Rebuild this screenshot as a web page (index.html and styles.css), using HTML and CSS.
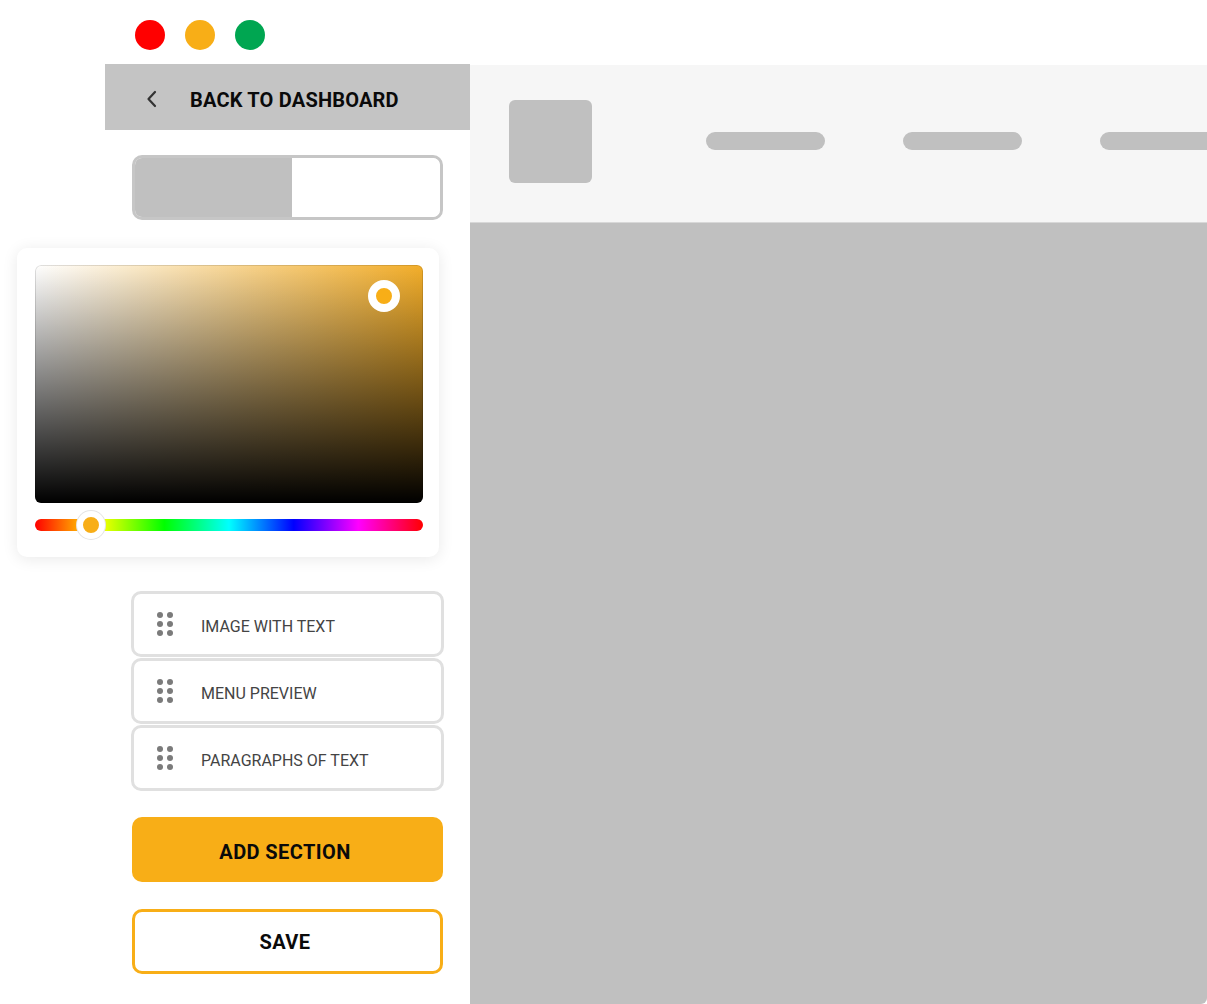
FILE: index.html
```html
<!DOCTYPE html>
<html lang="en">
<head>
  <meta charset="UTF-8" />
  <title>Page Editor</title>
  <link rel="stylesheet" href="styles.css">
</head>
<body>
  <!-- Window controls -->
  <div class="lights">
    <span class="light red"></span>
    <span class="light amber"></span>
    <span class="light green"></span>
  </div>

  <div class="window">
    <aside class="sidebar">
      <a class="back" href="#">
        <svg class="chevron" width="12" height="18" viewBox="0 0 12 18">
          <path d="M9 2 L2.5 9 L9 16" fill="none" stroke="#333" stroke-width="2.2" stroke-linecap="round" stroke-linejoin="round"/>
        </svg>
        <span>BACK TO DASHBOARD</span>
      </a>

      <div class="toggle">
        <div class="toggle-on"></div>
        <div class="toggle-off"></div>
      </div>

      <!-- Colour picker -->
      <div class="picker">
        <div class="sv-box">
          <span class="sv-handle"></span>
        </div>
        <div class="hue-bar">
          <span class="hue-thumb"></span>
        </div>
      </div>

      <!-- Page sections -->
      <ul class="sections">
        <li class="section">
          <span class="grip"><i></i><i></i><i></i><i></i><i></i><i></i></span>
          <span class="section-name">IMAGE WITH TEXT</span>
        </li>
        <li class="section">
          <span class="grip"><i></i><i></i><i></i><i></i><i></i><i></i></span>
          <span class="section-name">MENU PREVIEW</span>
        </li>
        <li class="section">
          <span class="grip"><i></i><i></i><i></i><i></i><i></i><i></i></span>
          <span class="section-name">PARAGRAPHS OF TEXT</span>
        </li>
      </ul>

      <button class="btn btn-primary">ADD SECTION</button>
      <button class="btn btn-outline">SAVE</button>
    </aside>

    <main class="preview">
      <header class="preview-header">
        <div class="logo"></div>
        <nav class="nav">
          <span class="pill"></span>
          <span class="pill"></span>
          <span class="pill"></span>
        </nav>
      </header>
      <div class="preview-body"></div>
    </main>
  </div>
</body>
</html>
```

FILE: styles.css
```css
body {
  margin: 0;
  background: #fff;
  font-family: Roboto, "Liberation Sans", sans-serif;
  color: #111;
  overflow: hidden;
  height: 1004px;
}

/* window controls */
.lights {
  display: flex;
  gap: 20px;
  padding: 20px 0 0 135px;
  height: 30px;
}

.light {
  width: 30px;
  height: 30px;
  border-radius: 50%;
}

.red { background: #ff0000; }
.amber { background: #f8ae17; }
.green { background: #00a651; }

.window {
  display: flex;
  margin-top: 14px;
  padding-left: 105px;
}

/* left editor column */
.sidebar {
  width: 365px;
  flex-shrink: 0;
  display: flex;
  flex-direction: column;
}

.back {
  display: flex;
  align-items: center;
  height: 66px;
  background: #c4c4c4;
  text-decoration: none;
  color: #0a0a0a;
  padding-left: 41px;
}

.chevron {
  margin-top: 3px;
}

.back span {
  margin-left: 32px;
  font-size: 20px;
  font-weight: 700;
  letter-spacing: 0.2px;
  padding-top: 5px;
}

.toggle {
  display: flex;
  margin: 25px 0 0 27px;
  width: 311px;
  height: 65px;
  box-sizing: border-box;
  border: 3px solid #c6c6c6;
  border-radius: 10px;
  overflow: hidden;
}

.toggle-on {
  width: 157px;
  background: #c0c0c0;
}

.toggle-off {
  flex: 1;
  background: #fff;
  border-radius: 0 7px 7px 0;
}

/* colour picker card */
.picker {
  margin: 28px 0 0 -88px;
  width: 422px;
  box-sizing: border-box;
  padding: 17px 16px 26px 18px;
  background: #fff;
  border-radius: 10px;
  box-shadow: 0 2px 16px rgba(0,0,0,0.09);
}

.sv-box {
  position: relative;
  height: 238px;
  border-radius: 6px;
  background:
    linear-gradient(to top, #000, rgba(0,0,0,0)),
    linear-gradient(to right, #fff, #f3ae2a);
  box-shadow: inset 0 0 0 1px rgba(0,0,0,0.12);
}

.sv-handle {
  position: absolute;
  left: 333px;
  top: 15px;
  width: 16px;
  height: 16px;
  border-radius: 50%;
  background: #f8ae17;
  border: 8px solid #fff;
}

.hue-bar {
  position: relative;
  margin-top: 16px;
  height: 12px;
  border-radius: 6px;
  background: linear-gradient(to right, #f00, #ff0, #0f0, #0ff, #00f, #f0f, #f00);
}

.hue-thumb {
  position: absolute;
  left: 42px;
  top: -8px;
  width: 16px;
  height: 16px;
  border-radius: 50%;
  background: #f8ae17;
  border: 6px solid #fff;
  box-shadow: 0 0 0 1px #e4e4e4;
}

/* section list */
.sections {
  list-style: none;
  margin: 34px 0 0 26px;
  padding: 0;
  display: flex;
  flex-direction: column;
  gap: 1px;
}

.section {
  display: flex;
  align-items: center;
  width: 313px;
  height: 66px;
  box-sizing: border-box;
  border: 3px solid #e0e0e0;
  border-radius: 10px;
  padding-left: 23px;
}

.grip {
  display: grid;
  grid-template-columns: 6px 6px;
  gap: 3px 4px;
  margin-top: -1px;
}

.grip i {
  width: 6px;
  height: 6px;
  border-radius: 50%;
  background: #7b7b7b;
}

.section-name {
  margin-left: 28px;
  font-size: 16px;
  color: #444;
  padding-top: 5px;
}

/* action buttons */
.btn {
  margin-left: 27px;
  width: 311px;
  height: 65px;
  border-radius: 10px;
  font-family: inherit;
  font-size: 20px;
  font-weight: 700;
  letter-spacing: 0.4px;
  color: #0a0a0a;
  cursor: pointer;
  padding: 4px 5px 0 0;
}

.btn-primary {
  margin-top: 26px;
  background: #f8ae17;
  border: none;
}

.btn-outline {
  margin-top: 27px;
  background: #fff;
  border: 3px solid #f8ae17;
  padding-top: 0;
}

/* site preview */
.preview {
  flex: 1;
  height: 939px;
  margin-top: 1px;
  display: flex;
  flex-direction: column;
  background: #c0c0c0;
  border-bottom-right-radius: 6px;
  overflow: hidden;
}

.preview-header {
  display: flex;
  align-items: center;
  height: 157px;
  flex-shrink: 0;
  background: #f6f6f6;
  padding-left: 39px;
  border-bottom: 1px solid #d8d8d8;
}

.logo {
  width: 83px;
  height: 83px;
  flex-shrink: 0;
  border-radius: 6px;
  background: #c0c0c0;
  margin-top: -4px;
}

.nav {
  display: flex;
  flex-shrink: 0;
  gap: 78px;
  margin-left: 114px;
  margin-top: -6px;
}

.pill {
  width: 119px;
  height: 18px;
  border-radius: 9px;
  background: #c0c0c0;
  flex-shrink: 0;
}

.preview-body {
  flex: 1;
}
```
